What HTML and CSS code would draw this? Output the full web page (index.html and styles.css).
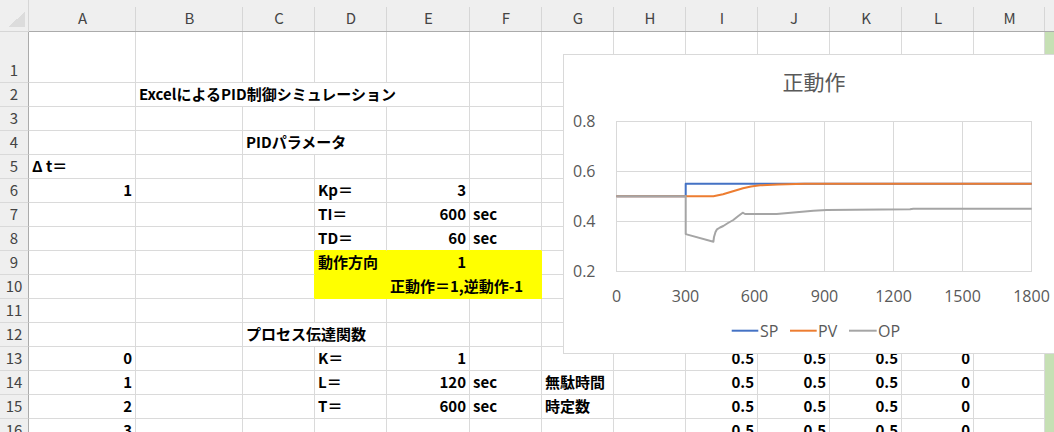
FILE: index.html
```html
<!DOCTYPE html>
<html lang="ja">

<head>
    <meta charset="UTF-8">
    <meta name="viewport" content="width=device-width, initial-scale=1.0">
    <title>ExcelによるPID制御シミュレーション</title>
    <link rel="stylesheet" href="styles.css">
</head>

<body>
    <div class="book">
        <div class="sheet">
            <!-- column headers -->
            <div class="corner"></div>
            <div class="ch">A</div><div class="ch">B</div><div class="ch">C</div><div class="ch">D</div>
            <div class="ch">E</div><div class="ch">F</div><div class="ch">G</div><div class="ch">H</div>
            <div class="ch">I</div><div class="ch">J</div><div class="ch">K</div><div class="ch">L</div>
            <div class="ch">M</div><div class="ch"></div>

            <!-- 1 -->
            <div class="rh">1</div>
            <div></div><div></div><div></div><div></div><div></div><div></div><div></div>
            <div></div><div></div><div></div><div></div><div></div><div></div><div class="n"></div>

            <!-- 2 -->
            <div class="rh">2</div>
            <div></div><div class="s4">ExcelによるPID制御シミュレーション</div>
            <div></div><div></div><div></div><div></div><div></div><div></div><div></div><div></div>
            <div class="n"></div>

            <!-- 3 -->
            <div class="rh">3</div>
            <div></div><div></div><div></div><div></div><div></div><div></div><div></div>
            <div></div><div></div><div></div><div></div><div></div><div></div><div class="n"></div>

            <!-- 4 -->
            <div class="rh">4</div>
            <div></div><div></div><div class="s2">PIDパラメータ</div>
            <div></div><div></div><div></div><div></div><div></div><div></div><div></div><div></div><div></div>
            <div class="n"></div>

            <!-- 5 -->
            <div class="rh">5</div>
            <div>Δ t＝</div><div></div><div></div><div></div><div></div><div></div><div></div>
            <div></div><div></div><div></div><div></div><div></div><div></div><div class="n"></div>

            <!-- 6 -->
            <div class="rh">6</div>
            <div class="r">1</div><div></div><div></div><div>Kp＝</div><div class="r">3</div>
            <div></div><div></div><div></div><div></div><div></div><div></div><div></div><div></div>
            <div class="n"></div>

            <!-- 7 -->
            <div class="rh">7</div>
            <div></div><div></div><div></div><div>TI＝</div><div class="r">600</div><div>sec</div>
            <div></div><div></div><div></div><div></div><div></div><div></div><div></div>
            <div class="n"></div>

            <!-- 8 -->
            <div class="rh">8</div>
            <div></div><div></div><div></div><div class="yb">TD＝</div><div class="r yb">60</div><div class="yb">sec</div>
            <div></div><div></div><div></div><div></div><div></div><div></div><div></div>
            <div class="n"></div>

            <!-- 9 -->
            <div class="rh">9</div>
            <div></div><div></div><div class="yr"></div><div class="y">動作方向</div><div class="y r">1</div><div class="y"></div>
            <div></div><div></div><div></div><div></div><div></div><div></div><div></div>
            <div class="n"></div>

            <!-- 10 -->
            <div class="rh">10</div>
            <div></div><div></div><div class="yr"></div><div class="y"></div><div class="y s2">正動作＝1,逆動作-1</div>
            <div></div><div></div><div></div><div></div><div></div><div></div><div></div>
            <div class="n"></div>

            <!-- 11 -->
            <div class="rh">11</div>
            <div></div><div></div><div></div><div></div><div></div><div></div><div></div>
            <div></div><div></div><div></div><div></div><div></div><div></div><div class="n"></div>

            <!-- 12 -->
            <div class="rh">12</div>
            <div></div><div></div><div class="s2">プロセス伝達関数</div>
            <div></div><div></div><div></div><div></div><div></div><div></div><div></div><div></div><div></div>
            <div class="n"></div>

            <!-- 13 -->
            <div class="rh">13</div>
            <div class="r">0</div><div></div><div></div><div>K＝</div><div class="r">1</div><div></div><div></div><div></div>
            <div class="r">0.5</div><div class="r">0.5</div><div class="r">0.5</div><div class="r">0</div><div></div>
            <div class="n"></div>

            <!-- 14 -->
            <div class="rh">14</div>
            <div class="r">1</div><div></div><div></div><div>L＝</div><div class="r">120</div><div>sec</div><div>無駄時間</div><div></div>
            <div class="r">0.5</div><div class="r">0.5</div><div class="r">0.5</div><div class="r">0</div><div></div>
            <div class="n"></div>

            <!-- 15 -->
            <div class="rh">15</div>
            <div class="r">2</div><div></div><div></div><div>T＝</div><div class="r">600</div><div>sec</div><div>時定数</div><div></div>
            <div class="r">0.5</div><div class="r">0.5</div><div class="r">0.5</div><div class="r">0</div><div></div>
            <div class="n"></div>

            <!-- 16 -->
            <div class="rh">16</div>
            <div class="r">3</div><div></div><div></div><div></div><div></div><div></div><div></div><div></div>
            <div class="r">0.5</div><div class="r">0.5</div><div class="r">0.5</div><div class="r">0</div><div></div>
            <div class="n"></div>
        </div>

        <!-- floating chart -->
        <div class="chart">
            <svg width="505" height="300" viewBox="0 0 505 300">
                <rect x="0.5" y="0.5" width="504" height="299" fill="#fff" stroke="#d9d9d9" />
                <text class="title" x="251" y="36" text-anchor="middle">正動作</text>

                <g stroke="#d9d9d9" stroke-width="1">
                    <path d="M53 67.5H469M53 117.5H469M53 167.5H469M53 217.5H469" />
                    <path d="M53.5 67V218M122.5 67V218M191.5 67V218M261.5 67V218M330.5 67V218M399.5 67V218M468.5 67V218" />
                </g>

                <g class="axis" text-anchor="end">
                    <text x="32.5" y="72.7">0.8</text>
                    <text x="32.5" y="122.7">0.6</text>
                    <text x="32.5" y="172.7">0.4</text>
                    <text x="32.5" y="222.7">0.2</text>
                </g>
                <g class="axis" text-anchor="middle">
                    <text x="53.5" y="247.7">0</text>
                    <text x="122.5" y="247.7">300</text>
                    <text x="191.5" y="247.7">600</text>
                    <text x="261.5" y="247.7">900</text>
                    <text x="330.5" y="247.7">1200</text>
                    <text x="399.5" y="247.7">1500</text>
                    <text x="468.5" y="247.7">1800</text>
                </g>

                <g fill="none" stroke-width="2" stroke-linejoin="round">
                    <path stroke="#4472c4" d="M53.5 142.2H122.7V129.7H468.7" />
                    <polyline stroke="#ed7d31"
                        points="53.5,142.2 150.4,142.2 160,140.2 170,137.2 180,134.2 188,132.4 197,131.3 215,130.6 242,129.8 468.7,129.7" />
                    <polyline stroke="#a5a5a5"
                        points="53.5,142.2 122.7,142.2 122.7,180.1 150.4,187.7 151,183 152.5,178 154,175.3 157,173.5 160.3,172 165,169 170.3,166 175,162.3 179.7,158.7 182,160 213.7,160 250.3,156.7 263.7,156 347,155.3 350.3,154.7 468.7,154.7" />
                </g>

                <g class="axis">
                    <path d="M168.7 276.7H195.3" stroke="#4472c4" stroke-width="2" />
                    <text x="197" y="282.7">SP</text>
                    <path d="M227 276.7H253.7" stroke="#ed7d31" stroke-width="2" />
                    <text x="255" y="282.7">PV</text>
                    <path d="M286 276.7H313.7" stroke="#a5a5a5" stroke-width="2" />
                    <text x="315" y="282.7">OP</text>
                </g>
            </svg>
        </div>
    </div>
</body>

</html>
```

FILE: styles.css
```css
body {
    margin: 0;
    background: #fff;
    overflow: hidden;
}

.book {
    position: relative;
    width: 1054px;
    height: 432px;
    overflow: hidden;
}

/* sheet grid */
.sheet {
    display: grid;
    grid-template-columns: 29px 107px 107px 72px 72px 83px repeat(7, 72px) 71px 100px;
    grid-template-rows: 32px 51px repeat(16, 24px);
    font-family: "Noto Sans CJK JP", "Noto Sans", sans-serif;
    font-size: 15px;
    line-height: 18px;
    font-weight: 700;
    color: #000;
}

.sheet > div {
    display: flex;
    align-items: flex-end;
    padding: 0 3px 3px 3px;
    border-right: 1px solid #dadada;
    border-bottom: 1px solid #dadada;
    white-space: nowrap;
}

.sheet > .r {
    justify-content: flex-end;
}

.sheet > .s2 {
    grid-column: span 2;
}

.sheet > .s4 {
    grid-column: span 4;
}

/* headers */
.sheet > .corner {
    background:
        linear-gradient(to bottom right, transparent 50%, #dcdcdc 50%) 8px 12px / 17px 15px no-repeat,
        #efefef;
    border-right-color: #d6d6d6;
    border-bottom-color: #d6d6d6;
}

.sheet > .ch {
    justify-content: center;
    padding-bottom: 4px;
    border-right: none;
    border-bottom-color: #ababab;
    background:
        linear-gradient(#d6d6d6, #d6d6d6) right 0 top 7px / 1px 25px no-repeat,
        #efefef;
    font-weight: 400;
    color: #444;
}

.sheet > .rh {
    justify-content: center;
    padding: 0 0 3px;
    background: #efefef;
    border-right-color: #ababab;
    border-bottom-color: #d9d9d9;
    font-weight: 400;
    color: #444;
}

/* fills */
.sheet > .y {
    background: #ffff00;
    border-color: #ffff00;
}

.sheet > .yb {
    border-bottom-color: #ffff00;
}

.sheet > .yr {
    border-right-color: #ffff00;
}

.sheet > .n {
    background: #c6e0b4;
    border-color: #c6e0b4;
}

/* chart */
.chart {
    position: absolute;
    left: 563px;
    top: 54px;
    width: 505px;
    height: 300px;
}

.chart svg {
    display: block;
}

.chart .title {
    font-family: "Noto Sans CJK JP", sans-serif;
    font-size: 21px;
    fill: #595959;
}

.chart .axis {
    font-family: "Open Sans", "Liberation Sans", sans-serif;
    font-size: 16px;
    fill: #595959;
}
```
